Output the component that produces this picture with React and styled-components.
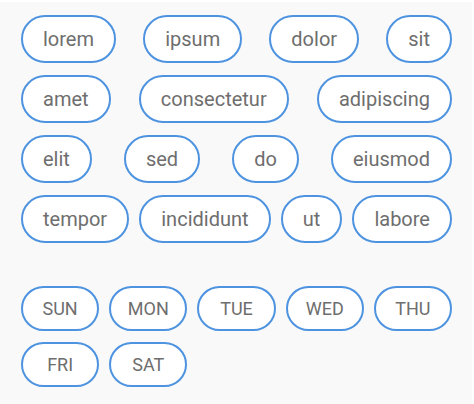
import React from 'react';
import styled, { createGlobalStyle } from 'styled-components';

const GlobalStyle = createGlobalStyle`
  html, body {
    margin: 0;
    padding: 0;
    background: #ffffff;
  }
`;

const Panel = styled.div`
  box-sizing: border-box;
  width: 472px;
  height: 404px;
  margin-top: 2px;
  padding: 13px 20px 0 21px;
  background: #f9f9f9;
  font-family: Roboto, 'Liberation Sans', sans-serif;
`;

const WordList = styled.div`
  display: flex;
  flex-wrap: wrap;
  justify-content: space-between;
  column-gap: 10px;
  row-gap: 12px;
`;

const DayGrid = styled.div`
  display: grid;
  grid-template-columns: repeat(5, minmax(0, 1fr));
  column-gap: 10px;
  row-gap: 11px;
  margin-top: 43px;
`;

const Chip = styled.div`
  box-sizing: border-box;
  display: flex;
  align-items: center;
  justify-content: center;
  height: ${(p) => (p.$small ? 45 : 48)}px;
  padding: ${(p) => (p.$small ? '0' : '0 20px')};
  border: 2px solid #4d93e0;
  border-radius: 999px;
  background: #ffffff;
  color: #6e6e6e;
  font-size: ${(p) => (p.$small ? 18 : 20)}px;
  white-space: nowrap;
`;

const words = [
  'lorem', 'ipsum', 'dolor', 'sit',
  'amet', 'consectetur', 'adipiscing',
  'elit', 'sed', 'do', 'eiusmod',
  'tempor', 'incididunt', 'ut', 'labore',
];

const days = ['SUN', 'MON', 'TUE', 'WED', 'THU', 'FRI', 'SAT'];

const App = () => (
  <>
    <GlobalStyle />
    <Panel>
      <WordList>
        {words.map((w) => (
          <Chip key={w}>{w}</Chip>
        ))}
      </WordList>
      <DayGrid>
        {days.map((d) => (
          <Chip key={d} $small>
            {d}
          </Chip>
        ))}
      </DayGrid>
    </Panel>
  </>
);

export default App;
